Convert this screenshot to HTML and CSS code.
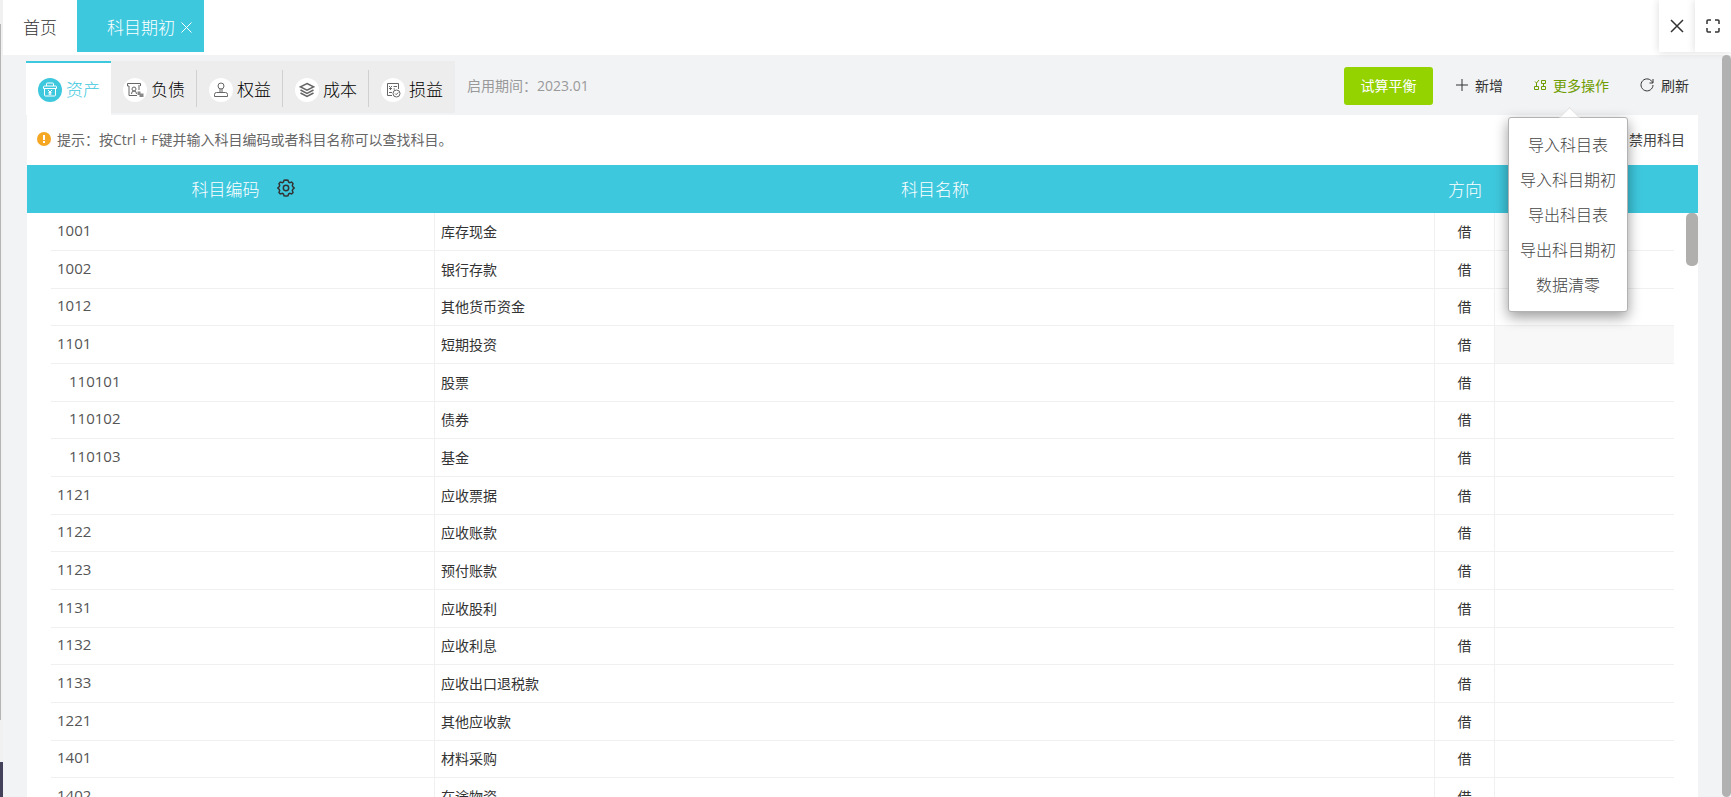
FILE: index.html
```
<!DOCTYPE html>
<html lang="zh-CN">
<head>
    <meta charset="UTF-8">
    <meta name="viewport" content="width=device-width, initial-scale=1.0">
    <title>科目期初</title>
    <link rel="stylesheet" href="styles.css">
</head>
<body>

<div class="side-edge">
    <div class="side-line"></div>
    <div class="side-foot"></div>
</div>

<div class="page">
    <header class="topbar">
        <a class="page-tab" href="#">首页</a>
        <div class="page-tab current">
            <span>科目期初</span>
            <button class="tab-close" aria-label="关闭标签">
                <svg width="11" height="11" viewBox="0 0 11 11"><path d="M.5.5l10 10M10.500.5l-10 10"/></svg>
            </button>
        </div>
        <div class="window-tools">
            <button class="window-btn" aria-label="关闭">
                <svg width="14" height="14" viewBox="0 0 14 14"><path d="M1 1l12 12M13 1L1 13"/></svg>
            </button>
            <button class="window-btn" aria-label="全屏">
                <svg width="14" height="14" viewBox="0 0 14 14"><path d="M1 5V2q0-1 1-1h3M9 1h3q1 0 1 1v3M13 9v3q0 1-1 1H9M5 13H2q-1 0-1-1V9"/></svg>
            </button>
        </div>
    </header>

    <div class="content">
        <main class="main">
            <div class="toolbar">
                <nav class="type-tabs">
                    <button class="type-tab active">
                        <span class="type-icon">
                            <svg width="16" height="16" viewBox="0 0 16 16"><path d="M4.500 4V2q0-1 1-1h5q1 0 1 1v2M2.500 4h11q1 0 1 1v1.500h-13V5q0-1 1-1zM2.500 6.500h11V13q0 1-1 1h-9q-1 0-1-1zM6 8l2 2 2-2M8 10v3M6.500 10.500h3M6.500 12h3"/></svg>
                        </span>
                        <span class="type-name">资产</span>
                    </button>
                    <button class="type-tab">
                        <span class="type-icon">
                            <svg width="18" height="16" viewBox="0 0 18 16"><path d="M3 4H1.500V1.500h13V4M3 4v9.500h8M13 3v5M5.500 12q0-3 2.500-3t2.500 3"/><circle cx="8" cy="7" r="2"/><path class="fill" d="M11.500 9.500h3v2h3V15h-4v-2h-2z"/></svg>
                        </span>
                        <span class="type-name">负债</span>
                    </button>
                    <button class="type-tab">
                        <span class="type-icon">
                            <svg width="16" height="16" viewBox="0 0 16 16"><circle cx="8" cy="4" r="3"/><path d="M7 7v3.500M9 7v3.500M1.500 14.500v-2q0-2 2-2h9q2 0 2 2v2z"/></svg>
                        </span>
                        <span class="type-name">权益</span>
                    </button>
                    <button class="type-tab">
                        <span class="type-icon">
                            <svg class="bold" width="16" height="16" viewBox="0 0 16 16"><path d="M8 1.500l6.500 3.300L8 8.100 1.500 4.800zM1.500 8L8 11.300 14.500 8M1.500 11L8 14.500l6.500-3.500"/></svg>
                        </span>
                        <span class="type-name">成本</span>
                    </button>
                    <button class="type-tab">
                        <span class="type-icon">
                            <svg width="16" height="16" viewBox="0 0 16 16"><path d="M13.500 7V1.500h-11v12H7M4 4l1.500 1.500L7 4M5.500 5.500V8M4 6.500h3M8.500 4.500H12M8.500 7H10M4 10.500h3M10 11.500l1.200 1.200 2-2.200"/><circle cx="11.500" cy="11.500" r="3.500"/></svg>
                        </span>
                        <span class="type-name">损益</span>
                    </button>
                </nav>
                <span class="period">启用期间：2023.01</span>

                <div class="actions">
                    <button class="balance-btn">试算平衡</button>
                    <button class="action">
                        <svg width="12" height="12" viewBox="0 0 12 12"><path d="M6 0v12M0 6h12"/></svg>新增
                    </button>
                    <div class="more">
                        <button class="action open" aria-expanded="true">
                            <svg width="12" height="12" viewBox="0 0 12 12"><path d="M1 2.500L2.500 4 5 1M7.500 1.500h4v3h-4zM.5 7.500h4v3h-4zM7.500 7.500h4v3h-4zM9.500 4.500v3M2.500 4v3.500"/></svg>更多操作
                        </button>
                        <ul class="more-menu">
                            <li><button>导入科目表</button></li>
                            <li><button>导入科目期初</button></li>
                            <li><button>导出科目表</button></li>
                            <li><button>导出科目期初</button></li>
                            <li><button>数据清零</button></li>
                        </ul>
                    </div>
                    <button class="action">
                        <svg width="14" height="14" viewBox="0 0 14 14"><path d="M12.500 4.500A6 6 0 1 0 13 7M13 1v4H9.500"/></svg>刷新
                    </button>
                </div>
            </div>

            <section class="panel">
                <div class="tips">
                    <svg class="tip-icon" width="14" height="14" viewBox="0 0 14 14"><circle cx="7" cy="7" r="7"/><path d="M6 3h2v5H6zM6 9h2v2H6z"/></svg>
                    <span>提示：按Ctrl + F键并输入科目编码或者科目名称可以查找科目。</span>
                    <span class="disabled-label">禁用科目</span>
                </div>

                <div class="table-head">
                    <table>
                        <colgroup><col class="col-code"><col><col class="col-dir"><col class="col-amount"></colgroup>
                        <thead>
                            <tr>
                                <th>
                                    <div class="code-title">
                                        科目编码
                                        <button class="gear" aria-label="设置">
                                            <svg width="18" height="18" viewBox="0 0 18 18"><path d="M9 1l1.900.3.8 1.900 1 .5 2-.6 1.300 1.500-.7 1.900.4 1.100L17.200 9l-1.500 1.500-.4 1.100.7 1.900-1.300 1.500-2-.6-1 .5-.8 1.900L9 17l-1.900-.2-.8-1.900-1-.5-2 .6L2 13.500l.7-1.900-.4-1.100L.8 9l1.500-1.400.4-1.100L2 4.600l1.300-1.500 2 .6 1-.5.8-1.900z"/><circle cx="9" cy="9" r="2.700"/></svg>
                                        </button>
                                    </div>
                                </th>
                                <th>科目名称</th>
                                <th>方向</th>
                                <th></th>
                            </tr>
                        </thead>
                    </table>
                </div>

                <div class="table-body">
                    <table>
                        <colgroup><col class="col-code"><col><col class="col-dir"><col class="col-amount"></colgroup>
                        <tbody>
                            <tr><td>1001</td><td>库存现金</td><td>借</td><td></td></tr>
                            <tr><td>1002</td><td>银行存款</td><td>借</td><td></td></tr>
                            <tr><td>1012</td><td>其他货币资金</td><td>借</td><td></td></tr>
                            <tr><td>1101</td><td>短期投资</td><td>借</td><td class="locked"></td></tr>
                            <tr><td class="child">110101</td><td>股票</td><td>借</td><td></td></tr>
                            <tr><td class="child">110102</td><td>债券</td><td>借</td><td></td></tr>
                            <tr><td class="child">110103</td><td>基金</td><td>借</td><td></td></tr>
                            <tr><td>1121</td><td>应收票据</td><td>借</td><td></td></tr>
                            <tr><td>1122</td><td>应收账款</td><td>借</td><td></td></tr>
                            <tr><td>1123</td><td>预付账款</td><td>借</td><td></td></tr>
                            <tr><td>1131</td><td>应收股利</td><td>借</td><td></td></tr>
                            <tr><td>1132</td><td>应收利息</td><td>借</td><td></td></tr>
                            <tr><td>1133</td><td>应收出口退税款</td><td>借</td><td></td></tr>
                            <tr><td>1221</td><td>其他应收款</td><td>借</td><td></td></tr>
                            <tr><td>1401</td><td>材料采购</td><td>借</td><td></td></tr>
                            <tr><td>1402</td><td>在途物资</td><td>借</td><td></td></tr>
                        </tbody>
                    </table>
                    <div class="table-scroll"></div>
                </div>
            </section>
        </main>
        <div class="page-scroll"></div>
    </div>
</div>

</body>
</html>
```
FILE: styles.css
```
* {
    box-sizing: border-box;
}

body {
    margin: 0;
    height: 100vh;
    display: flex;
    overflow: hidden;
    background-color: #f2f3f5;
    font-family: "Open Sans", "Noto Sans CJK SC", sans-serif;
    font-size: 14px;
    color: #333;
}

button {
    padding: 0;
    border: none;
    background: none;
    font: inherit;
    color: inherit;
    cursor: pointer;
}

svg {
    display: block;
    flex: none;
    fill: none;
    stroke: currentColor;
}

/* edge of the collapsed side menu */
.side-edge {
    flex: none;
    width: 3px;
    display: flex;
    flex-direction: column;
    background-color: #f1f1f1;
    padding-top: 24px;
}

.side-line {
    flex: 1;
    width: 1px;
    margin-bottom: 42px;
    background-color: #b5b5b5;
}

.side-foot {
    height: 35px;
    background-color: #44415a;
}

.page {
    flex: 1;
    min-width: 0;
    display: flex;
    flex-direction: column;
}

/* top bar */
.topbar {
    flex: none;
    display: flex;
    height: 55px;
    padding-bottom: 3px;
    background-color: #fff;
    font-size: 17px;
    font-weight: 300;
}

.page-tab {
    display: flex;
    align-items: center;
    padding: 0 20px;
    color: #333;
    text-decoration: none;
}

.page-tab.current {
    gap: 6px;
    padding: 0 12px 0 30px;
    background-color: #3ec8de;
    color: #fff;
}

.tab-close {
    padding-top: 3px;
}

.window-tools {
    display: flex;
    margin-left: auto;
}

.window-btn {
    display: flex;
    align-items: center;
    justify-content: center;
    width: 36px;
    background-color: #fff;
    box-shadow: 0 0 8px rgba(0, 0, 0, 0.15);
}

.window-btn svg {
    stroke-width: 1.5;
}

/* content */
.content {
    flex: 1;
    min-height: 0;
    display: flex;
}

.main {
    flex: 1;
    min-width: 0;
    display: flex;
    flex-direction: column;
    padding: 6px 24px 0;
}

.page-scroll {
    flex: none;
    width: 9px;
    border-radius: 5px;
    background-color: #b1b1b1;
}

.toolbar {
    flex: none;
    display: flex;
    align-items: flex-start;
    height: 54px;
}

.type-tabs {
    display: flex;
    align-items: flex-start;
    height: 52px;
    margin-left: -1px;
    background-color: #ededed;
}

.type-tab {
    position: relative;
    display: flex;
    align-items: center;
    gap: 4px;
    height: 52px;
    padding: 6px 12px 0 12px;
    font-size: 17px;
    font-weight: 300;
    color: #000;
}

.type-tab.active {
    height: 54px;
    padding: 2px 11px 0 12px;
    border-top: 2px solid #3ec8de;
    background-color: #fff;
    color: #3ec8de;
}

/* divider between two inactive tabs */
.type-tab:not(.active):not(:last-child)::after {
    content: "";
    position: absolute;
    top: 9px;
    right: 0;
    width: 1px;
    height: 37px;
    background-color: #d0d0d0;
}

.type-icon {
    display: flex;
    align-items: center;
    justify-content: center;
    width: 24px;
    height: 24px;
    border-radius: 50%;
    background-color: #fff;
    color: #666;
}

.type-tab.active .type-icon {
    background-color: #3ec8de;
    color: #fff;
}

.type-icon .fill {
    fill: #888;
    stroke: none;
}

.type-icon .bold {
    stroke-width: 1.5;
}

.type-name {
    padding-bottom: 4px;
}

.period {
    margin-left: 12px;
    line-height: 50px;
    color: #999;
}

.actions {
    display: flex;
    align-items: center;
    gap: 31px;
    height: 50px;
    margin-left: auto;
    padding-right: 9px;
}

.balance-btn {
    width: 89px;
    height: 38px;
    margin-right: -8px;
    padding-bottom: 2px;
    border-radius: 3px;
    background-color: #95d300;
    color: #fff;
}

.action {
    display: flex;
    align-items: center;
    gap: 7px;
    padding-bottom: 2px;
}

.action.open {
    color: #6f9c00;
}

/* drop-down under the "more" button */
.more {
    position: relative;
}

.more-menu {
    position: absolute;
    top: 42px;
    left: -26px;
    z-index: 10;
    width: 120px;
    margin: 0;
    padding: 8px 0 10px;
    list-style: none;
    border: 1px solid #b2b2b2;
    border-radius: 3px;
    background-color: #fff;
    box-shadow: 0 5px 14px rgba(0, 0, 0, 0.4);
    font-size: 16px;
    font-weight: 300;
    color: #444;
}

.more-menu::before {
    content: "";
    position: absolute;
    top: -8px;
    left: 53px;
    width: 14px;
    height: 14px;
    border: 1px solid #ddd;
    border-right: none;
    border-bottom: none;
    background-color: #fff;
    transform: rotate(45deg);
    clip-path: polygon(0 0, 100% 0, 0 100%);
}

.more-menu button {
    display: block;
    width: 100%;
    height: 35px;
    white-space: nowrap;
}

/* account table */
.panel {
    flex: 1;
    min-height: 0;
    display: flex;
    flex-direction: column;
    background-color: #fff;
}

.tips {
    flex: none;
    display: flex;
    align-items: center;
    gap: 6px;
    height: 50px;
    padding: 0 13px 2px 10px;
    color: #666;
}

.tip-icon {
    stroke: none;
    fill: #fff;
}

.tip-icon circle {
    fill: #f5a623;
}

.disabled-label {
    margin-left: auto;
    color: #444;
}

table {
    width: 100%;
    table-layout: fixed;
    border-collapse: separate;
    border-spacing: 0;
}

.col-code {
    width: 384px;
}

.col-dir {
    width: 60px;
}

.col-amount {
    width: 179px;
}

.table-head {
    flex: none;
    padding: 0 24px;
    background-color: #3ec8de;
    color: #fff;
}

th {
    height: 48px;
    padding: 0 0 2px;
    font-size: 17px;
    font-weight: 300;
}

.code-title {
    display: flex;
    align-items: center;
    justify-content: center;
    gap: 17px;
}

.gear {
    color: #333;
}

.gear svg {
    stroke-width: 1.5;
}

.table-body {
    position: relative;
    flex: 1;
    min-height: 0;
    padding: 0 24px;
    overflow: hidden;
}

.table-scroll {
    position: absolute;
    top: 0;
    right: 0;
    width: 12px;
    height: 53px;
    border-radius: 5px;
    background-color: #b1afae;
}

td {
    height: 38px;
    padding: 0 6px 2px;
    border-right: 1px solid #f0f0f0;
    border-bottom: 1px solid #f0f0f0;
}

tr:nth-child(3n) td {
    height: 37px;
}

td:first-child {
    padding-bottom: 4px;
    font-size: 15px;
    color: #555;
}

td:nth-child(3) {
    text-align: center;
}

td:last-child {
    border-right: none;
}

td.child {
    padding-left: 18px;
}

td.locked {
    background-color: #f8f8f8;
}
```
